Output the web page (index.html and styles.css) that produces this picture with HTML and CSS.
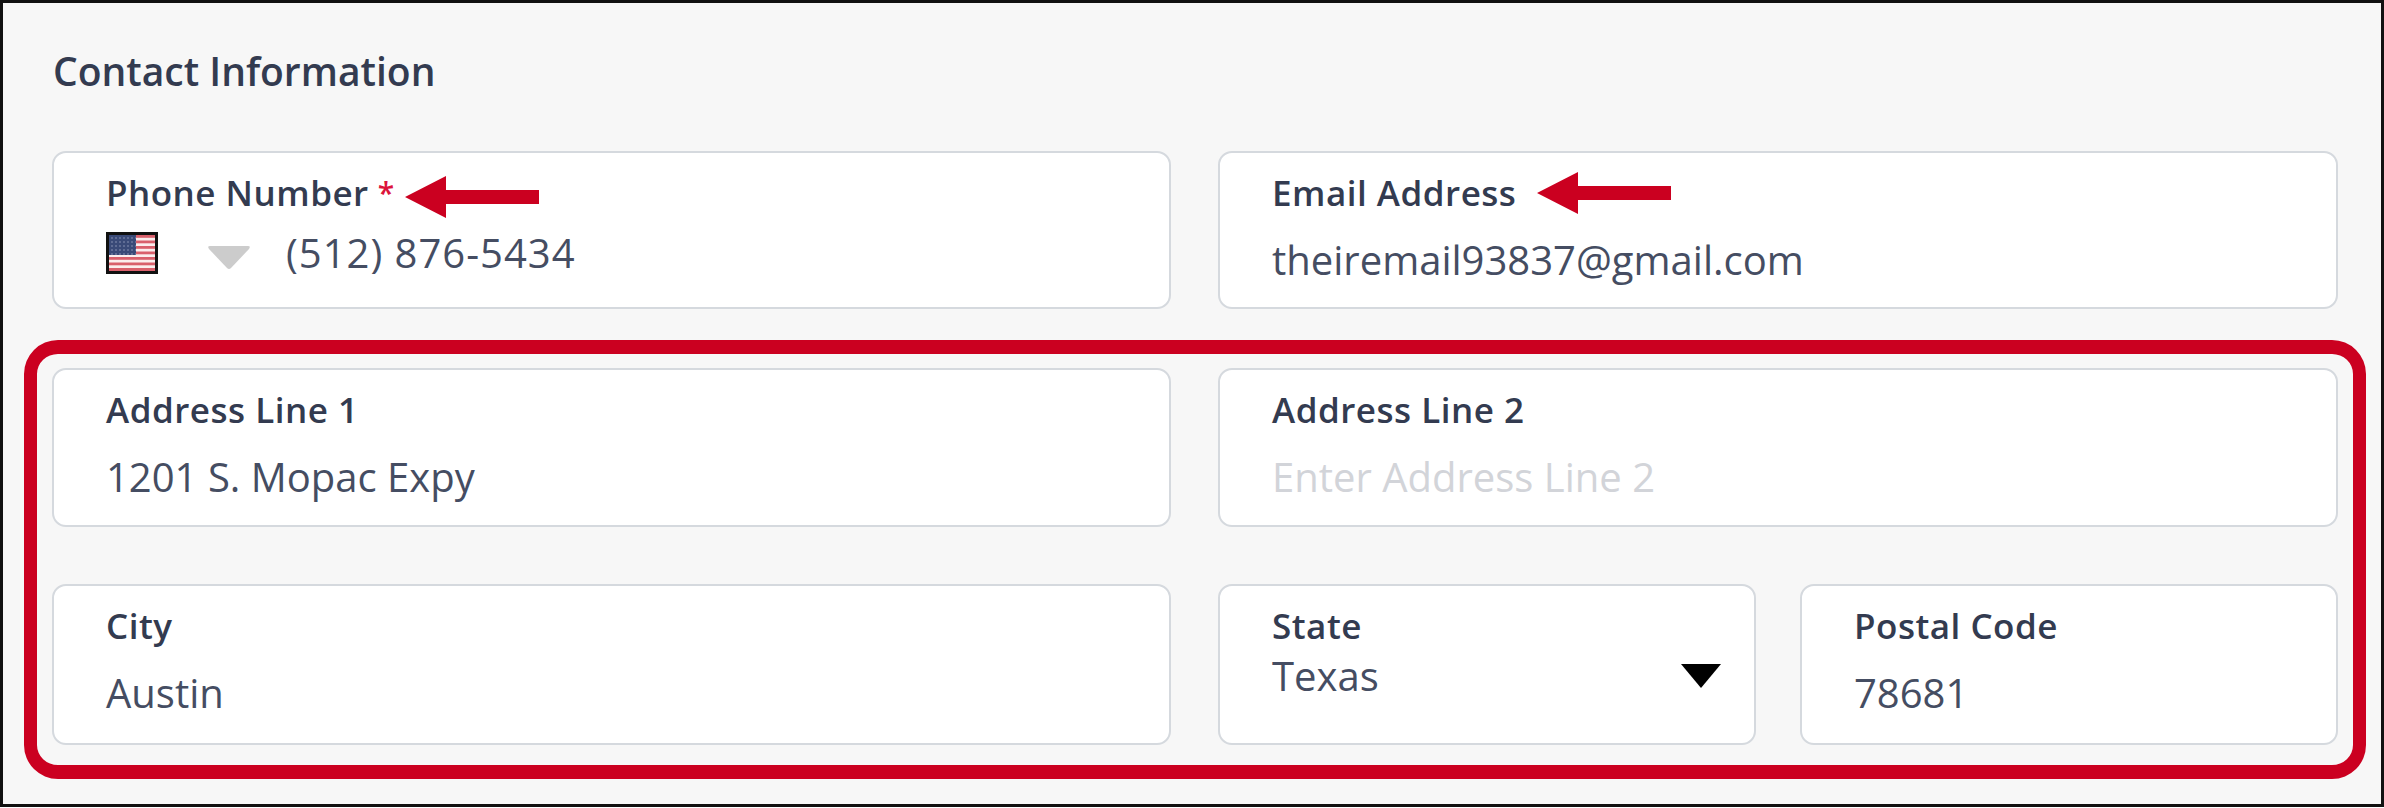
FILE: index.html
```html
<!DOCTYPE html>
<html lang="en">
<head>
    <meta charset="UTF-8">
    <title>Contact Information</title>
    <link rel="stylesheet" href="styles.css">
</head>
<body>
<div class="panel">
    <h2 class="panel-title">Contact Information</h2>

    <div class="row row-contact">
        <div class="field">
            <div class="field-label">
                <span>Phone Number</span>
                <span class="required">*</span>
                <svg class="arrow arrow-phone" viewBox="0 0 134 42"><path d="M0 21 L41 0 V14 H134 V28 H41 V42 Z"/></svg>
            </div>
            <div class="phone-value">
                <svg class="flag" viewBox="0 0 52 42">
                    <defs>
                        <pattern id="stars" width="4" height="4" patternUnits="userSpaceOnUse">
                            <circle cx="2" cy="2" r="0.8" fill="#8c97b8"/>
                        </pattern>
                    </defs>
                    <rect width="52" height="42" fill="#111"/>
                    <rect x="3" y="3" width="46" height="36" fill="#fbeeee"/>
                    <g fill="#d9606c">
                        <rect x="3" y="3" width="46" height="2.8"/>
                        <rect x="3" y="8.5" width="46" height="2.8"/>
                        <rect x="3" y="14" width="46" height="2.8"/>
                        <rect x="3" y="19.5" width="46" height="2.8"/>
                        <rect x="3" y="25" width="46" height="2.8"/>
                        <rect x="3" y="30.5" width="46" height="2.8"/>
                        <rect x="3" y="36" width="46" height="3"/>
                    </g>
                    <rect x="3" y="3" width="27" height="20" fill="#3a4a78"/>
                    <rect x="3" y="3" width="27" height="20" fill="url(#stars)"/>
                </svg>
                <svg class="caret caret-grey" viewBox="0 0 44 25"><path d="M3 1 H41 Q44 1 42 4 L24 23 Q22 25 20 23 L2 4 Q0 1 3 1 Z"/></svg>
                <span class="field-value phone-number">(512) 876-5434</span>
            </div>
        </div>
        <div class="field">
            <div class="field-label">
                <span>Email Address</span>
                <svg class="arrow arrow-email" viewBox="0 0 134 42"><path d="M0 21 L41 0 V14 H134 V28 H41 V42 Z"/></svg>
            </div>
            <div class="field-value">theiremail93837@gmail.com</div>
        </div>
    </div>

    <div class="address-box">
        <div class="row row-address">
            <div class="field">
                <div class="field-label">Address Line 1</div>
                <div class="field-value">1201 S. Mopac Expy</div>
            </div>
            <div class="field">
                <div class="field-label">Address Line 2</div>
                <div class="field-value placeholder">Enter Address Line 2</div>
            </div>
        </div>
        <div class="row">
            <div class="field">
                <div class="field-label">City</div>
                <div class="field-value">Austin</div>
            </div>
            <div class="row-split">
                <div class="field field-select">
                    <div class="field-label">State</div>
                    <div class="select-value">
                        <span class="field-value">Texas</span>
                        <svg class="caret caret-black" viewBox="0 0 40 24"><path d="M0 0 H40 L20 24 Z"/></svg>
                    </div>
                </div>
                <div class="field">
                    <div class="field-label">Postal Code</div>
                    <div class="field-value">78681</div>
                </div>
            </div>
        </div>
    </div>
</div>
</body>
</html>
```

FILE: styles.css
```css
/* Contact form panel */
* {
    box-sizing: border-box;
}
body {
    margin: 0;
    font-family: "Open Sans", "Noto Sans", sans-serif;
    color: #333b50;
}
.panel {
    width: 2384px;
    height: 807px;
    border: 3px solid #111;
    background-color: #f7f7f7;
}
.panel-title {
    margin: 0;
    padding: 38px 0 0 50px;
    height: 148px;
    font-size: 39px;
    line-height: 60px;
    font-weight: 600;
}
.row {
    display: grid;
    grid-template-columns: 1119px 1120px;
    column-gap: 47px;
}
.row-contact {
    margin-left: 49px;
}
.row-split {
    display: grid;
    grid-template-columns: 538px 538px;
    column-gap: 44px;
}
.address-box {
    width: 2342px;
    height: 439px;
    margin: 31px 0 0 21px;
    padding: 14px 15px 0 15px;
    border-style: solid;
    border-color: #cb0020;
    border-width: 14px 13px;
    border-radius: 34px;
}
.row-address {
    margin-bottom: 57px;
}
.field {
    height: 158px;
    padding: 20px 24px 0 52px;
    border: 2px solid #d5d9de;
    border-radius: 14px;
    background-color: #fff;
}
.row-address .field {
    height: 159px;
}
.row-address + .row .field {
    height: 161px;
}
.field-label {
    display: flex;
    align-items: center;
    height: 40px;
    font-size: 35px;
    line-height: 40px;
    font-weight: 600;
    letter-spacing: 0.5px;
}
.required {
    margin-left: 9px;
    font-size: 30px;
    color: #dc143c;
}
.arrow {
    fill: #cb0020;
    width: 134px;
    height: 42px;
}
.arrow-phone {
    margin-left: 10px;
    margin-top: 8px;
}
.arrow-email {
    margin-left: 21px;
}
.field-value {
    margin-top: 24px;
    font-size: 40px;
    line-height: 46px;
    color: #454d62;
}
.placeholder {
    color: #d2d4d9;
}
.phone-value {
    display: flex;
    align-items: center;
    margin-top: 17px;
}
.phone-value .field-value,
.select-value .field-value {
    margin-top: 0;
}
.phone-number {
    letter-spacing: 1px;
}
.flag {
    width: 52px;
    height: 42px;
}
.caret-grey {
    fill: #cccccc;
    width: 44px;
    height: 25px;
    margin: 8px 35px 0 49px;
}
.select-value {
    display: flex;
    align-items: center;
    justify-content: space-between;
    margin-top: 7px;
    padding-right: 9px;
}
.caret-black {
    fill: #000;
    width: 40px;
    height: 24px;
}
```
